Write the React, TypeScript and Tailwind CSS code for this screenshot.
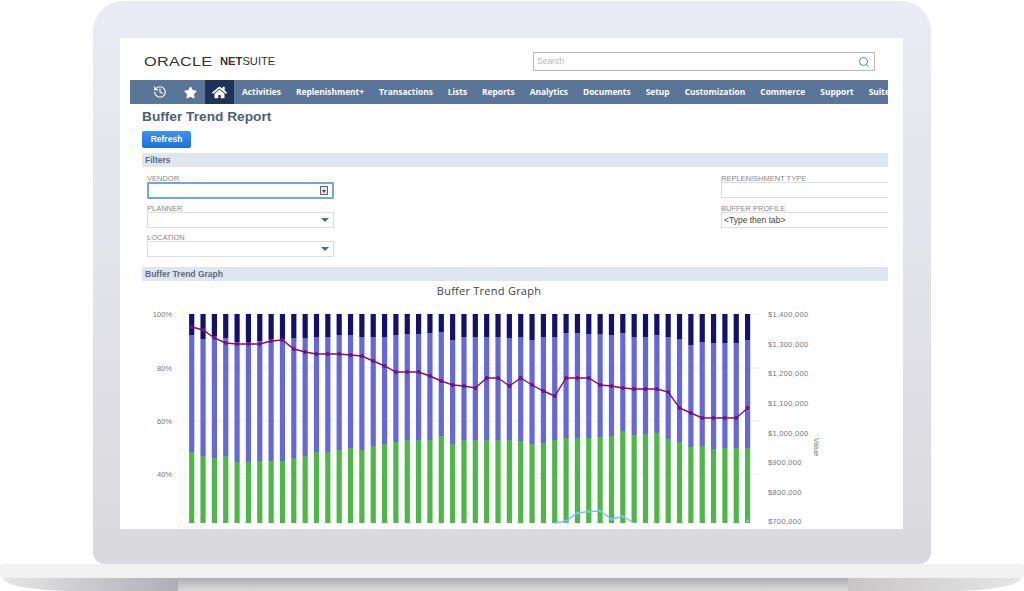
import { History, Search } from "lucide-react";
import { FaHome, FaStar } from "react-icons/fa";

// one row per bar, read off the reference: navy end, green top, line y
const bars = [
  [335, 452, 327], [339, 456, 330], [336, 458, 338], [338, 456, 343], [342, 462, 344],
  [342, 462, 344], [341, 461, 344], [339, 461, 341], [339, 461, 340], [338, 458, 349],
  [338, 456, 352], [337, 452, 354], [337, 452, 354], [335, 450, 354], [335, 448, 355],
  [337, 450, 356], [337, 446, 361], [337, 444, 366], [335, 442, 372], [334, 440, 372],
  [334, 440, 372], [333, 440, 376], [332, 436, 381], [340, 444, 385], [337, 440, 386],
  [337, 440, 388], [337, 440, 378], [337, 440, 378], [338, 440, 386], [337, 441, 378],
  [340, 444, 385], [337, 443, 391], [337, 440, 396], [333, 438, 378], [333, 438, 378],
  [334, 438, 378], [334, 437, 385], [335, 436, 386], [333, 431, 388], [337, 435, 389],
  [337, 434, 389], [335, 433, 389], [337, 439, 392], [339, 442, 408], [345, 447, 413],
  [342, 446, 418], [343, 449, 418], [343, 448, 418], [343, 448, 418], [340, 448, 408],
];

const barX = (i: number) => 49.7 + i * 11.345;

const linePoints = bars.map((b, i) => `${barX(i)},${b[2]}`).join(" ");

const leftTicks = [
  ["100%", 314],
  ["80%", 368],
  ["60%", 421],
  ["40%", 474],
] as const;

const rightTicks = [
  ["$1,400,000", 314],
  ["$1,300,000", 344],
  ["$1,200,000", 373],
  ["$1,100,000", 403],
  ["$1,000,000", 433],
  ["$900,000", 462],
  ["$800,000", 492],
  ["$700,000", 521],
] as const;

const lowLine = [
  [32, 523], [33, 521], [34, 513], [35, 511.5], [36, 511], [37, 519], [38, 516.5], [39, 523],
];

const menu = [
  "Activities", "Replenishment+", "Transactions", "Lists", "Reports", "Analytics",
  "Documents", "Setup", "Customization", "Commerce", "Support", "Suite",
];

const Field = ({
  label,
  focus,
  children,
}: {
  label: string;
  focus?: boolean;
  children?: React.ReactNode;
}) => (
  <div className="flex flex-col">
    <div className="h-[10px] text-[7.5px] leading-[13px] text-[#8a8a8a]">{label}</div>
    <div
      className={
        focus
          ? "h-[17px] mb-[3px] w-full flex items-center justify-end pr-[4px] bg-white border-2 border-[#6fa8dc] rounded-[1px]"
          : "h-[16px] mb-[3px] w-full flex items-center justify-end pr-[4px] bg-white border border-[#dddddd]"
      }
    >
      {children}
    </div>
  </div>
);

const Caret = () => <div className="w-0 h-0 border-x-[4px] border-x-transparent border-t-[4px] border-t-[#4d6a96]" />;

const Chart = () => (
  <svg width="746" height="229" viewBox="142 300 746 229" className="block">
    {leftTicks.map(([t, y]) => (
      <g key={t}>
        <line x1="182" x2="760" y1={y} y2={y} stroke="#eeeeee" strokeWidth="1" />
        <text x="172" y={y + 3} textAnchor="end" fontSize="7.5" fill="#777777">
          {t}
        </text>
      </g>
    ))}
    {bars.map((b, i) => (
      <g key={i} transform={`translate(${142 + barX(i)} 0)`}>
        <rect x="-2.6" y="314" width="5.2" height={b[0] - 314} fill="#12126b" />
        <rect x="-2.6" y={b[0]} width="5.2" height={b[1] - b[0]} fill="#6468d8" />
        <rect x="-2.6" y={b[1]} width="5.2" height={523 - b[1]} fill="#4db748" />
      </g>
    ))}
    <g transform="translate(142 0)">
      <polyline points={linePoints} fill="none" stroke="#7d0f7a" strokeWidth="1.4" />
      {bars.map((b, i) => (
        <circle key={i} cx={barX(i)} cy={b[2]} r="2" fill="#7d0f7a" />
      ))}
      <polyline
        points={lowLine.map(([i, y]) => `${barX(i)},${y}`).join(" ")}
        fill="none"
        stroke="#7cc0e6"
        strokeWidth="1.4"
      />
      {lowLine.slice(1, -1).map(([i, y]) => (
        <circle key={i} cx={barX(i)} cy={y} r="1.6" fill="#7cc0e6" />
      ))}
      <circle cx={barX(49)} cy="521" r="1.6" fill="#7cc0e6" />
    </g>
    {rightTicks.map(([t, y]) => (
      <text key={t} x="768" y={y + 3} fontSize="7.5" letterSpacing="0.3" fill="#777777">
        {t}
      </text>
    ))}
    <text x="0" y="0" fontSize="7.5" fill="#777777" textAnchor="middle" transform="translate(814 447) rotate(90)">
      Value
    </text>
  </svg>
);

const App = () => {
  return (
    <div className="w-[1024px] h-[591px] overflow-hidden bg-white font-['Liberation_Sans',Arial,sans-serif]">
      <div className="ml-[93px] mt-[1px] w-[838px] h-[563px] pt-[37px] px-[27px] rounded-t-[30px] rounded-b-[12px] bg-gradient-to-b from-[#ebebf5] to-[#d9d9dd]">
        <div className="w-[783px] h-[491px] overflow-hidden bg-white pl-[22px] pr-[15px]">
          <div className="flex items-center justify-between h-[42px] pt-[5px] pl-[2px] pr-[13px]">
            <div className="flex items-center pt-[1px] text-[#333333] whitespace-nowrap">
              <span className="inline-block w-[76px] origin-left scale-x-[1.3] text-[12.5px] leading-none tracking-[0.2px]">
                ORACLE
              </span>
              <span className="text-[11.2px] leading-none font-bold">NET</span>
              <span className="text-[11.2px] leading-none">SUITE</span>
            </div>
            <div className="w-[342px] h-[19px] flex items-center justify-between pl-[3px] pr-[4px] border border-[#bbbbbb]">
              <span className="text-[8.5px] text-[#b5b5b5]">Search</span>
              <Search size={12} color="#5f86a8" strokeWidth={2} />
            </div>
          </div>

          <div className="-ml-[12px] w-[758px] h-[24px] flex items-center overflow-hidden whitespace-nowrap pl-[15px] bg-[#5b7599] text-white font-['Open_Sans',sans-serif] text-[8.4px] font-bold">
            <div className="w-[30px] h-full flex items-center justify-center shrink-0">
              <History size={14} color="white" strokeWidth={2} />
            </div>
            <div className="w-[30px] h-full flex items-center justify-center shrink-0">
              <FaStar size={13} color="white" />
            </div>
            <div className="w-[29px] h-full flex items-center justify-center shrink-0 bg-[#1f3356]">
              <FaHome size={15} color="white" />
            </div>
            <div className="flex items-center gap-[15px] pl-[8px]">
              {menu.map((m) => (
                <span key={m}>{m}</span>
              ))}
            </div>
          </div>

          <div className="h-[27px] flex items-center text-[13.7px] font-bold text-[#4d5f79]">Buffer Trend Report</div>
          <button className="block w-[49px] h-[17px] rounded-[2px] bg-gradient-to-b from-[#3f91f2] to-[#1f6fdc] text-white text-[8.5px] font-bold">
            Refresh
          </button>

          <div className="mt-[5px] h-[14px] flex items-center pl-[3px] bg-[#e0e6ef] text-[8.5px] font-bold text-[#5a6b85]">
            Filters
          </div>

          <div className="h-[100px] pt-[5px] pl-[5px] flex justify-between">
            <div className="w-[187px] flex flex-col">
              <Field label="VENDOR" focus>
                <div className="w-[8px] h-[9px] flex items-end justify-center pb-[1px] bg-[#e4e4e4] border border-[#666666]">
                  <div className="w-0 h-0 border-x-[2.5px] border-x-transparent border-t-[3px] border-t-[#4a4a4a]" />
                </div>
              </Field>
              <Field label="PLANNER">
                <Caret />
              </Field>
              <Field label="LOCATION">
                <Caret />
              </Field>
            </div>
            <div className="w-[167px] overflow-hidden">
              <div className="w-[200px] flex flex-col gap-[1px]">
                <Field label="REPLENISHMENT TYPE" />
                <Field label="BUFFER PROFILE">
                  <span className="w-full pl-[2px] text-[8.5px] text-[#444444]">&lt;Type then tab&gt;</span>
                </Field>
              </div>
            </div>
          </div>

          <div className="h-[14px] flex items-center pl-[3px] bg-[#e0e6ef] text-[8.5px] font-bold text-[#5a6b85]">
            Buffer Trend Graph
          </div>
          <div className="h-[17px] mt-[2px] pr-[52px] flex items-center justify-center font-['Open_Sans',sans-serif] text-[11px] tracking-[0.25px] text-[#444444]">
            Buffer Trend Graph
          </div>
          <Chart />
        </div>
      </div>

      <div className="h-[14px] rounded-[4px] bg-[#f1f1f1]" />
      <div className="mx-[3px] h-[13px] flex overflow-hidden rounded-bl-[70px_13px] rounded-br-[70px_13px]">
        <div className="w-[175px] bg-gradient-to-r from-[#e6e6e6] to-[#aeaeb4]" />
        <div className="w-[670px] bg-gradient-to-b from-[#adadb3] to-[#dcdcdc]" />
        <div className="flex-1 bg-gradient-to-r from-[#c8c5c7] to-[#e6e6e6]" />
      </div>
    </div>
  );
};

export default App;
